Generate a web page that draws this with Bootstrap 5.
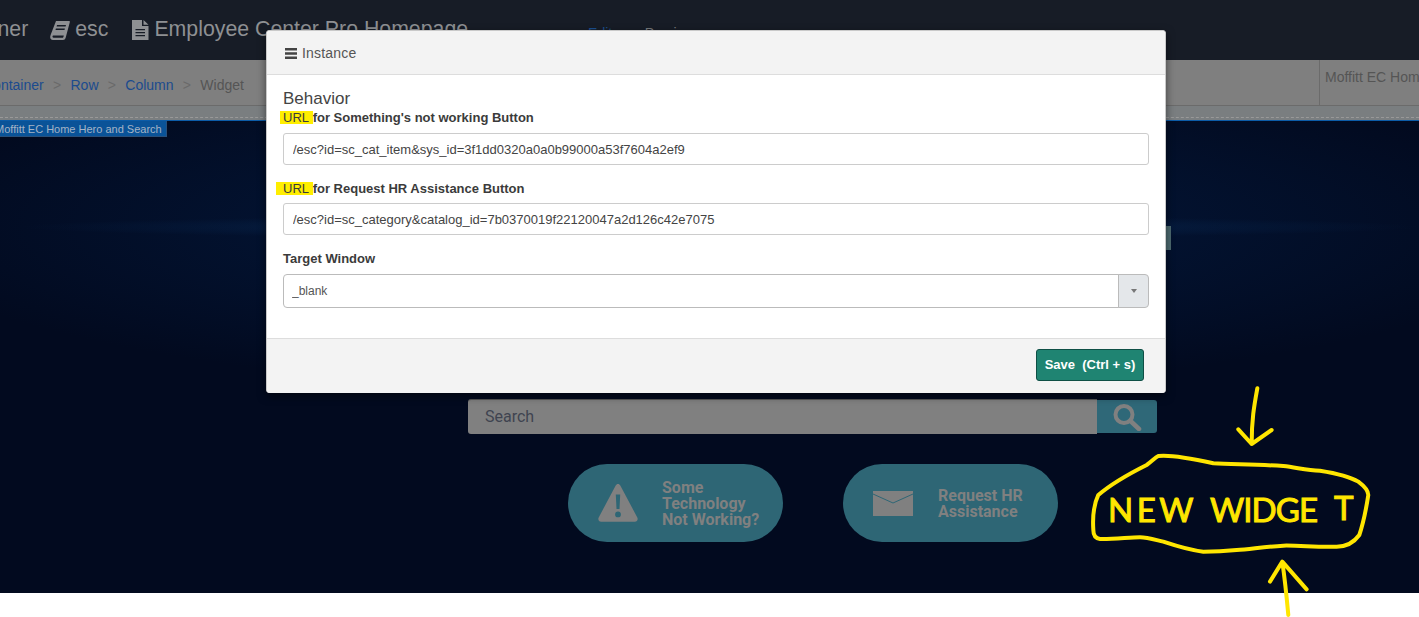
<!DOCTYPE html>
<html lang="en">
<head>
<meta charset="utf-8">
<title>Employee Center Pro Homepage</title>
<link href="https://cdn.jsdelivr.net/npm/bootstrap@5.3.0/dist/css/bootstrap.min.css" rel="stylesheet">
<script src="https://cdn.jsdelivr.net/npm/bootstrap@5.3.0/dist/js/bootstrap.bundle.min.js"></script>
<style>
html,body{height:617px;overflow:hidden;background:#fff;}
body{position:relative;font-family:"Liberation Sans",Arial,sans-serif;color:#333;}
.top-strip{height:60px;background:#171c26;color:#8e9093;font-size:21.3px;white-space:nowrap;overflow:hidden;}
.top-crop{margin-left:-57px;}
.top-icon{flex:none;display:block;}
.book-icon{margin-left:22px;margin-right:5px;}
.file-icon{margin-left:23px;margin-right:5px;}
.top-links{margin-left:120px;font-size:14px;margin-top:7px;}
.top-links .edit-tab{color:#1c4f8f;}
.top-links .prev-tab{color:#77797c;margin-left:20px;}
.crumb-strip{height:46px;background:#7f7f7f;border-bottom:1px solid #6b6b6b;font-size:14px;color:#555;white-space:nowrap;overflow:hidden;}
.crumb-list{margin-left:-17px;padding-top:17px;line-height:16px;}
.crumb-list a{color:#1b4b8e;text-decoration:none;}
.crumb-sep{color:#6a6a6a;margin:0 9.3px;}
.side-name{width:100px;margin-left:auto;border-left:1px solid #6b6b6b;padding:8px 0 0 5px;overflow:hidden;line-height:18px;height:45px;flex:none;}
.gap-strip{height:11px;background:#7a7e80;}
.dash-line{height:4px;background:#7a7e80;border-top:1px dashed #999;border-bottom:1px solid #0c5ca8;}
.hero-area{height:472px;overflow:hidden;background:
 radial-gradient(ellipse 700px 12px at 720px 106px,#08264e,rgba(8,38,78,0)),
 radial-gradient(ellipse 850px 170px at 720px 105px,#031a40,rgba(3,26,64,0)),
 #020a1f;}
.hero-tag{width:167px;height:16px;background:#0a5398;border:1px solid #28507c;border-top:0;border-left:0;color:#a5b4c6;font-size:11px;line-height:17px;white-space:nowrap;overflow:hidden;}
.hero-tag span{display:block;margin-left:-5px;}
.hero-tick{width:5px;height:24px;margin:89px 0 0 1166px;background:#4d6a70;}
.search-line{margin:149px 0 0 468px;width:689px;}
.search-box{width:629px;height:35px;background:#808080;border:0;border-top:1px solid #555;border-radius:3px 0 0 3px;color:#3f4450;font:16px/34px Roboto,sans-serif;padding-left:17px;}
.search-btn{width:60px;height:33px;margin-top:1px;background:#2f6878;border-radius:0 3px 3px 0;}
.pill-line{margin:30px 0 0 568px;gap:60px;}
.hero-pill{width:215px;height:78px;border-radius:39px;background:#2e6675;color:#808080;font:700 16px/16px Roboto,sans-serif;}
.hero-pill span{padding-top:2px;}
.pill-icon{flex:none;}
.pill-warn{padding-left:30px;gap:24px;}
.pill-mail{padding-left:30px;gap:25px;}
.inst-modal{position:absolute;left:266px;top:30px;width:900px;height:363px;background:#fff;border:1px solid #c9c9c9;border-radius:3px;box-shadow:0 3px 9px rgba(0,0,0,.5);}
.inst-head{height:44px;background:#f3f3f3;border-bottom:1px solid #ddd;font-size:14px;letter-spacing:.2px;color:#555;padding:2px 0 0 18px;gap:5px;border-radius:3px 3px 0 0;}
.inst-body{height:263px;padding:14px 16px 0;}
.inst-title{font-size:17px;line-height:19px;color:#444;font-weight:400;margin:0;}
.field-label{display:block;font-size:13px;line-height:15px;font-weight:700;color:#3b3b3b;margin:0;}
.field-one{margin-top:2px;}
.field-two{margin-top:16px;}
.field-three{margin-top:16px;}
.hl-one{background:#ffee00;font-weight:400;display:inline-block;line-height:13px;margin-left:-3px;padding:0 0 0 3px;}
.hl-two{background:#ffee00;font-weight:400;display:inline-block;line-height:13px;margin-left:-7px;padding:0 0 0 7px;}
.inst-input.form-control{height:32px;font-size:13px;color:#444;padding:0 9px;border:1px solid #ccc;border-radius:3px;margin-top:8px;box-shadow:none;}
.inst-input.input-tight.form-control{margin-top:7px;}
.inst-group{margin-top:8px;height:34px;}
.inst-group .form-control{font-size:12px;color:#555;padding:0 8px;border:1px solid #bbb;border-radius:4px 0 0 4px;height:34px;}
.inst-arrow{width:31px;justify-content:center;background:#e4e7ea;border:1px solid #bbb;border-radius:0 4px 4px 0;padding:0;}
.arrow-tri{width:0;height:0;border-left:3px solid transparent;border-right:3px solid transparent;border-top:4px solid #777;}
.inst-foot{height:55px;background:#f3f3f3;border-top:1px solid #ddd;padding:0 21px 2px 0;border-radius:0 0 3px 3px;}
.save-btn.btn{width:108px;height:32px;padding:0;background:#1f8472;border:1px solid #0e4f45;color:#fff;font-size:13px;font-weight:700;border-radius:3px;white-space:pre;}
.ink-layer{position:absolute;left:0;top:0;width:1419px;height:617px;pointer-events:none;}
.ink-line{fill:none;stroke:#ffe600;stroke-width:12;stroke-linecap:round;stroke-linejoin:round;}
.ink-text{fill:#ffe600;stroke:#ffe600;stroke-width:1px;font-family:Lato,"Liberation Sans",sans-serif;font-size:33px;font-weight:400;}
</style>
</head>
<body>
<div class="top-strip d-flex align-items-center">
  <span class="top-crop">Designer</span>
  <svg class="top-icon book-icon" width="20" height="19" viewBox="0 0 20 19"><path fill="#8e9093" d="M6 0h13c.8 0 1 .6.8 1.300L15.800 16.200c-.4 1.300-1 2.800-3 2.800H3c-2 0-3-1.500-2.800-3.200.1-.7.300-1.400.5-2zM7 4l-.4 1.500h9L16 4zM5.900 7.500l-.4 1.500h9l.4-1.500zM3.500 14.500c-.7 0-1 .5-1 1.100 0 .6.300 1.100 1 1.100h9.500c.4-.6.600-1.300.8-2.200z"/></svg>
  <span>esc</span>
  <svg class="top-icon file-icon" width="18" height="20" viewBox="0 0 18 20"><path fill="#8e9093" d="M1 0h10v6h6.500v14H1zM12.500 0l5 4.800h-5zM4.500 9v1.300h9.500V9zM4.500 12v1.300h9.500V12zM4.500 15v1.300h9.500V15z"/></svg>
  <span>Employee Center Pro Homepage</span>
  <span class="top-links"><span class="edit-tab">Editor</span><span class="prev-tab">Preview</span></span>
</div>
<div class="crumb-strip d-flex">
  <div class="crumb-list"><a href="#">Container</a><span class="crumb-sep">&gt;</span><a href="#">Row</a><span class="crumb-sep">&gt;</span><a href="#">Column</a><span class="crumb-sep">&gt;</span>Widget</div>
  <div class="side-name">Moffitt EC Home</div>
</div>
<div class="gap-strip"></div>
<div class="dash-line"></div>
<div class="hero-area">
  <div class="hero-tag"><span>Moffitt EC Home Hero and Search</span></div>
  <div class="hero-tick"></div>
  <div class="search-line d-flex align-items-start">
    <div class="search-box">Search</div>
    <div class="search-btn d-flex align-items-center justify-content-center">
      <svg width="30" height="28" viewBox="0 0 30 28"><circle cx="12" cy="11.500" r="8.500" fill="none" stroke="#808080" stroke-width="4"/><path d="M18.500 18l8.500 8" stroke="#808080" stroke-width="4.500" stroke-linecap="round"/></svg>
    </div>
  </div>
  <div class="pill-line d-flex">
    <div class="hero-pill pill-warn d-flex align-items-center">
      <svg class="pill-icon" width="40" height="38" viewBox="0 0 40 38"><path fill-rule="evenodd" fill="#808080" d="M20 0c1 0 1.800.6 2.300 1.500l17 32c1 2-.2 4.200-2.500 4.200H3.200C.9 37.700-.3 35.500.7 33.500l17-32C18.200.6 19 0 20 0zM17.800 10.500l.7 14.500h3l.7-14.500zM20 27.500a2.900 2.900 0 1 0 0 5.800 2.900 2.900 0 0 0 0-5.800z"/></svg>
      <span>Some<br>Technology<br>Not Working?</span>
    </div>
    <div class="hero-pill pill-mail d-flex align-items-center">
      <svg class="pill-icon" width="40" height="25" viewBox="0 0 40 25"><rect width="40" height="25" fill="#808080"/><path d="M0 3l20 9L40 3" fill="none" stroke="#2e6675" stroke-width="1"/></svg>
      <span>Request HR<br>Assistance</span>
    </div>
  </div>
</div>

<div class="inst-modal">
  <div class="inst-head d-flex align-items-center">
    <svg width="12" height="11" viewBox="0 0 12 11"><path fill="#444" d="M0 0h12v2.500H0zM0 4.200h12v2.500H0zM0 8.400h12v2.500H0z"/></svg>
    <span>Instance</span>
  </div>
  <div class="inst-body">
    <h5 class="inst-title">Behavior</h5>
    <label class="field-label field-one"><span class="hl-one">URL&nbsp;</span>for Something's not working Button</label>
    <input class="form-control inst-input" type="text" value="/esc?id=sc_cat_item&amp;sys_id=3f1dd0320a0a0b99000a53f7604a2ef9">
    <label class="field-label field-two"><span class="hl-two">URL&nbsp;</span>for Request HR Assistance Button</label>
    <input class="form-control inst-input input-tight" type="text" value="/esc?id=sc_category&amp;catalog_id=7b0370019f22120047a2d126c42e7075">
    <label class="field-label field-three">Target Window</label>
    <div class="input-group inst-group">
      <input class="form-control" type="text" value="_blank">
      <span class="input-group-text inst-arrow"><span class="arrow-tri"></span></span>
    </div>
  </div>
  <div class="inst-foot d-flex align-items-center justify-content-end">
    <button class="btn save-btn" type="button">Save  (Ctrl + s)</button>
  </div>
</div>

<svg class="ink-layer" viewBox="0 0 1419 617">
  <g transform="translate(1070 380) scale(.3333)">
    <path class="ink-line" d="M562 25C552 80 545 120 545 192M505 148L545 192L605 150"/>
    <path class="ink-line" d="M655 705C650 650 645 600 637 545M600 605L637 545L710 628"/>
    <path class="ink-line" d="M265 228C300 224 350 232 430 250C480 254 540 252 640 258C680 262 710 272 750 272C800 280 840 290 865 305C885 320 895 335 895 345C888 390 880 430 868 465C850 490 830 500 800 500C740 502 690 496 640 497C580 500 540 508 500 510C460 514 430 515 400 515C370 512 340 505 280 485C250 478 230 472 210 472C180 472 130 478 90 477C75 475 70 465 70 450C68 420 68 380 85 345C120 315 170 285 230 255C245 245 255 233 265 228Z"/>
  </g>
  <text class="ink-text" y="522"><tspan x="1108" textLength="85">NEW</tspan> <tspan x="1210" textLength="108">WIDGE</tspan> <tspan x="1334" y="520">T</tspan></text>
</svg>
</body>
</html>
